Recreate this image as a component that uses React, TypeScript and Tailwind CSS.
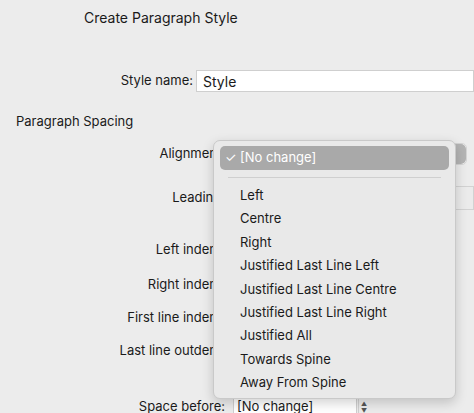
import React from 'react';

const FONT = { fontFamily: 'Inter, "Liberation Sans", sans-serif' };

const MENU_ITEMS = [
  'Left',
  'Centre',
  'Right',
  'Justified Last Line Left',
  'Justified Last Line Centre',
  'Justified Last Line Right',
  'Justified All',
  'Towards Spine',
  'Away From Spine',
];

function Label({ text, h, top }: { text: string; h: string; top?: string }) {
  return (
    <div className={`flex items-center ${h} ${top ?? ''}`}>
      <div className="w-[225px] text-right pr-0 whitespace-nowrap">{text}</div>
    </div>
  );
}

function Stepper() {
  return (
    <div className="flex flex-col items-center justify-center w-[11px] h-full border-l border-[#d0d0d0] text-[6px] leading-[7px] text-[#555]">
      <span>▲</span>
      <span>▼</span>
    </div>
  );
}

export default function App() {
  return (
    <div
      className="relative w-[474px] h-[413px] overflow-hidden bg-[#ececec] text-[13px] text-[#1a1a1a]"
      style={FONT}
    >
      <div className="pl-[84px] pt-[9px] text-[14px] leading-[18px]">Create Paragraph Style</div>

      <div className="flex items-center mt-[43px] h-[22px]">
        <div className="w-[193px] text-right">Style name:</div>
        <div className="ml-[3px] flex-1 h-[22px] bg-white border border-[#cfcfcf] flex items-center pl-[6px] text-[14px]">
          Style
        </div>
      </div>

      <div className="pl-[16px] mt-[20px] leading-[18px]">Paragraph Spacing</div>

      <div className="flex flex-col mt-[12px]">
        <div className="flex items-center h-[23px]">
          <div className="w-[225px] text-right whitespace-nowrap">Alignment:</div>
          <div className="ml-[8px] flex-1 mr-[7px] h-[22px] rounded-[5px] bg-white border border-[#d4d4d4] flex items-center justify-end">
            <div className="w-[17px] h-full rounded-r-[5px] bg-[#b4b4b4]" />
          </div>
        </div>

        <div className="flex items-center h-[24px] mt-[21px]">
          <div className="w-[225px] text-right whitespace-nowrap">Leading:</div>
          <div className="ml-[8px] flex-1 h-[24px] bg-[#ebebeb] border border-[#d2d2d2] flex justify-end pr-[8px]">
            <div className="w-[11px] h-full border-l border-[#bdbdbd]" />
          </div>
        </div>

        <Label text="Left indent:" h="h-[20px]" top="mt-[30px]" />
        <Label text="Right indent:" h="h-[20px]" top="mt-[15px]" />
        <Label text="First line indent:" h="h-[20px]" top="mt-[13px]" />
        <Label text="Last line outdent:" h="h-[20px]" top="mt-[13px]" />

        <div className="flex items-center h-[20px] mt-[36px]">
          <div className="w-[225px] text-right whitespace-nowrap">Space before:</div>
          <div className="ml-[8px] w-[124px] h-[20px] bg-white border border-[#cfcfcf] flex items-center pl-[3px]">
            [No change]
          </div>
          <div className="ml-[1px] h-[20px]">
            <Stepper />
          </div>
        </div>
      </div>

      <div className="absolute left-[213px] top-[140px] w-[243px] h-[259px] rounded-[7px] bg-[#e9e9e9] border border-[#c9c9c9] shadow-[0_4px_12px_rgba(0,0,0,0.18)] px-[6px] pt-[5px]">
        <div className="flex items-center h-[24px] rounded-[5px] bg-[#a9a9a9] text-white pl-[5px] text-[13px]">
          <span className="w-[15px] text-[13px]">✓</span>
          <span>[No change]</span>
        </div>
        <div className="mx-[8px] mt-[7px] mb-[6px] h-px bg-[#cfcfcf]" />
        <div className="flex flex-col">
          {MENU_ITEMS.map((item) => (
            <div key={item} className="h-[23.4px] flex items-center pl-[20px] whitespace-nowrap">
              {item}
            </div>
          ))}
        </div>
      </div>
    </div>
  );
}
